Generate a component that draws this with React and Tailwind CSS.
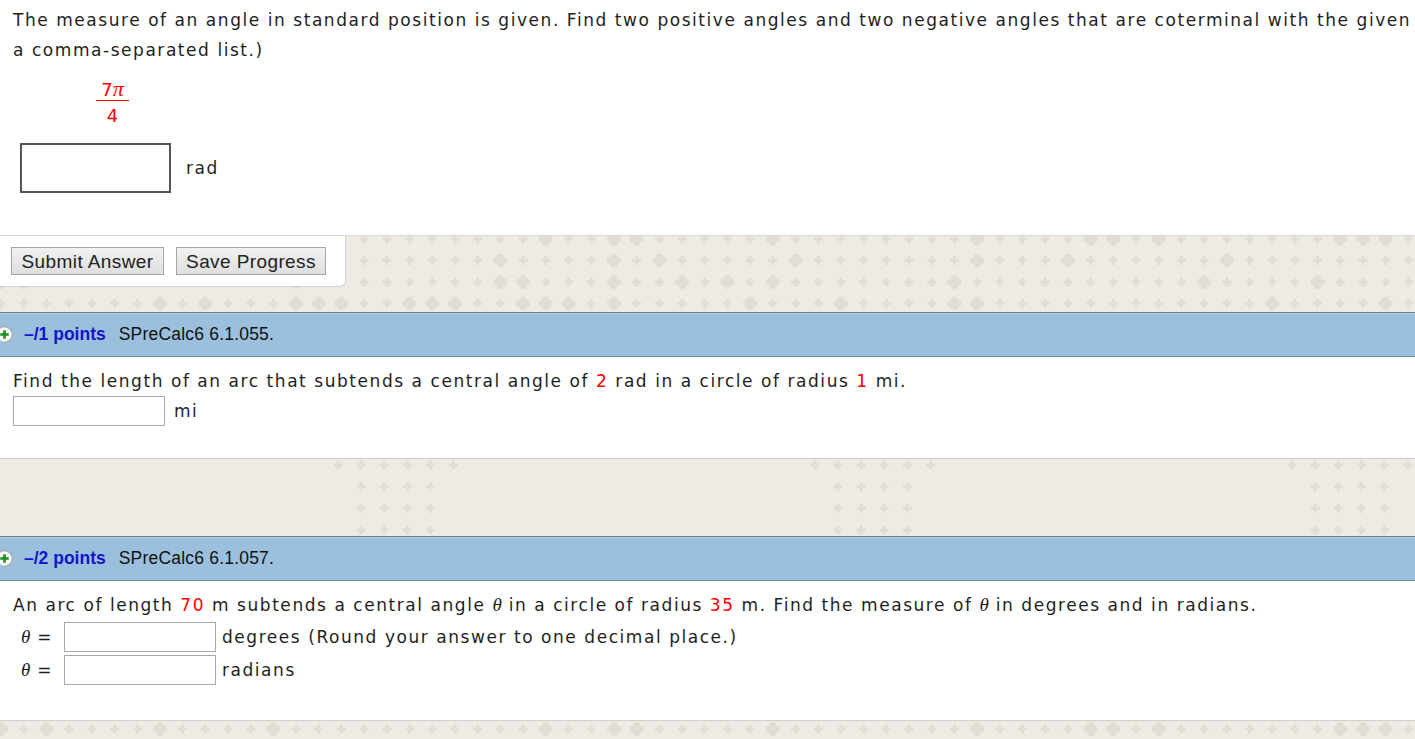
import React from 'react';

const BEIGE = '#eeebe5';
const MARK = '#e1ddd5';

// small cross used in the page background texture
const Plus = ({ x, y }) => (
  <g fill={MARK}>
    <rect x={x - 4.5} y={y - 1.5} width={9} height={3} />
    <rect x={x - 1.5} y={y - 4.5} width={3} height={9} />
  </g>
);

// rounded four-leaf shape that shows up between the crosses
const Clover = ({ x, y }) => (
  <g fill={MARK}>
    <circle cx={x - 3.5} cy={y} r={3.6} />
    <circle cx={x + 3.5} cy={y} r={3.6} />
    <circle cx={x} cy={y - 3.5} r={3.6} />
    <circle cx={x} cy={y + 3.5} r={3.6} />
    <rect x={x - 3} y={y - 3} width={6} height={6} />
  </g>
);

// deterministic pseudo-random so the texture stays the same every render
const rnd = (i, j) => {
  const s = Math.sin(i * 12.9898 + j * 78.233) * 43758.5453;
  return s - Math.floor(s);
};

const FullTexture = ({ height, y0 }) => {
  const marks = [];
  for (let r = 0; r < 6; r++) {
    const y = y0 + r * 21.5;
    if (y > height + 6) break;
    for (let c = 0; c < 64; c++) {
      const x = 1 + c * 22.7;
      const v = rnd(c, r);
      marks.push(
        v < 0.22 ? <Clover key={`${r}-${c}`} x={x} y={y} /> : <Plus key={`${r}-${c}`} x={x} y={y} />
      );
    }
  }
  return (
    <svg className="absolute inset-0" width="1415" height={height}>
      {marks}
    </svg>
  );
};

const ClusterTexture = () => {
  const marks = [];
  [338, 815, 1292].forEach((x0, k) => {
    for (let c = 0; c < 6; c++) marks.push(<Plus key={`t${k}${c}`} x={x0 + c * 23.1} y={6} />);
    for (let r = 1; r < 4; r++)
      for (let c = 1; c < 5; c++) marks.push(<Plus key={`${k}${r}${c}`} x={x0 + c * 23.1} y={6 + r * 21.7} />);
  });
  return (
    <svg className="absolute inset-0" width="1415" height="78">
      {marks}
    </svg>
  );
};

const GreenPlus = () => (
  <svg width="17" height="17" viewBox="0 0 17 17" className="-ml-[4px] shrink-0">
    <circle cx="8.5" cy="8.5" r="7.8" fill="#fafafa" stroke="#a8a8a8" strokeWidth="1.2" />
    <rect x="4.3" y="7.2" width="8.4" height="2.6" fill="#1b8f1b" />
    <rect x="7.2" y="4.3" width="2.6" height="8.4" fill="#1b8f1b" />
  </svg>
);

const PointsBar = ({ points, code }) => (
  <div className="h-[45px] bg-[#9bc0de] border-t border-t-[#6d7b87] border-b border-b-[#72879a] flex items-center font-['Liberation_Sans',Arial,sans-serif] text-[17.5px] tracking-normal shadow-[inset_0_1px_0_#b3d0e8]">
    <GreenPlus />
    <span className="ml-[11px] font-bold text-[#1414c8]">–/{points} points</span>
    <span className="ml-[13px] text-[#111] tracking-[0.2px]">{code}</span>
  </div>
);

const Red = ({ children }) => <span className="text-[#ff0000]">{children}</span>;
const Theta = () => (
  <span className="font-['Liberation_Serif',serif] italic text-[19px] leading-none tracking-normal">θ</span>
);

const Button = ({ children, w }) => (
  <button
    className={`h-[28px] ${w} border border-[#a6a6a6] bg-gradient-to-b from-[#f1f1f1] to-[#dfdfdf] text-[19px] tracking-[0.4px] text-[#222] font-['Liberation_Sans',Arial,sans-serif] leading-none`}
  >
    {children}
  </button>
);

export default function App() {
  return (
    <div className="w-[1415px] h-[739px] overflow-hidden bg-white text-[#1e1e1e] font-['DejaVu_Sans',Verdana,sans-serif] text-[17px] tracking-[1.55px]">
      {/* question 1 */}
      <div className="h-[235px] pt-[5px] px-[13px] leading-[30px]">
        <p className="whitespace-nowrap">
          The measure of an angle in standard position is given. Find two positive angles and two negative angles that are coterminal with the given
        </p>
        <p>a comma-separated list.)</p>
        <div className="ml-[83px] mt-[13px] inline-flex flex-col items-center text-[#ff0000] tracking-normal">
          <span className="leading-[20px] text-[18px]">
            7<span className="font-['Liberation_Serif',serif] italic text-[22px] leading-none">π</span>
          </span>
          <span className="w-[33px] border-t border-[#ff0000]" />
          <span className="leading-[30px] text-[18px]">4</span>
        </div>
        <div className="flex items-center mt-[12px] ml-[7px]">
          <input className="h-[50px] w-[151px] border-2 border-[#555] bg-white outline-none" />
          <span className="ml-[15px]">rad</span>
        </div>
      </div>

      {/* answer buttons over the textured strip */}
      <div className="relative h-[77px] border-t border-[#d9d9d9]" style={{ backgroundColor: BEIGE }}>
        <FullTexture height={77} y0={3} />
        <div className="relative w-[346px] h-[51px] bg-white rounded-br-[6px] border-r border-b border-[#d2d2d2] flex items-start pt-[11px] pl-[11px] gap-[12px]">
          <Button w="w-[153px]">Submit Answer</Button>
          <Button w="w-[150px]">Save Progress</Button>
        </div>
      </div>

      <PointsBar points={1} code="SPreCalc6 6.1.055." />

      {/* question 2 */}
      <div className="h-[101px] pt-[9px] px-[13px] leading-[30px]">
        <p className="whitespace-nowrap">
          Find the length of an arc that subtends a central angle of <Red>2</Red> rad in a circle of radius <Red>1</Red> mi.
        </p>
        <div className="flex items-center">
          <input className="h-[30px] w-[152px] border border-[#aaa] bg-white outline-none" />
          <span className="ml-[9px]">mi</span>
        </div>
      </div>

      <div className="relative h-[78px] border-t border-[#cfcfcf]" style={{ backgroundColor: BEIGE }}>
        <ClusterTexture />
      </div>

      <PointsBar points={2} code="SPreCalc6 6.1.057." />

      {/* question 3 */}
      <div className="h-[139px] pt-[9px] px-[13px] leading-[30px]">
        <p className="whitespace-nowrap">
          An arc of length <Red>70</Red> m subtends a central angle <Theta /> in a circle of radius <Red>35</Red> m. Find the measure of <Theta /> in degrees and in radians.
        </p>
        <div className="flex items-center mt-[2px]">
          <span className="w-[51px] pl-[8px] whitespace-nowrap">
            <Theta /> =
          </span>
          <input className="h-[30px] w-[152px] border border-[#aaa] bg-white outline-none" />
          <span className="ml-[6px]">degrees (Round your answer to one decimal place.)</span>
        </div>
        <div className="flex items-center mt-[3px]">
          <span className="w-[51px] pl-[8px] whitespace-nowrap">
            <Theta /> =
          </span>
          <input className="h-[30px] w-[152px] border border-[#aaa] bg-white outline-none" />
          <span className="ml-[6px]">radians</span>
        </div>
      </div>

      <div className="relative h-[40px] border-t border-[#d0d0d0]" style={{ backgroundColor: BEIGE }}>
        <FullTexture height={40} y0={8} />
      </div>
    </div>
  );
}
